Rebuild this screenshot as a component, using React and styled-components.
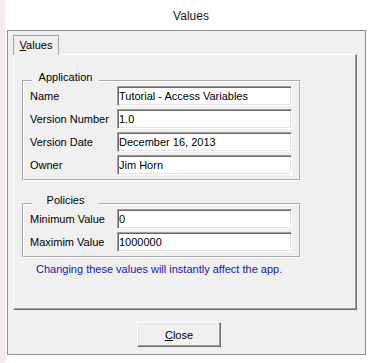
import React from 'react';
import styled, { createGlobalStyle } from 'styled-components';

const Global = createGlobalStyle`
  html, body { margin: 0; padding: 0; background: #ffffff; }
  body { font-family: "Liberation Sans", Arial, sans-serif; font-size: 11px; color: #000; }
  * { box-sizing: border-box; }
`;

const Window = styled.div`
  width: 370px;
  height: 363px;
  display: flex;
  flex-direction: column;
  background: linear-gradient(to right, #f9e9ea 0, #f9e9ea 5px, #ffffff 6px);
`;

const TitleBar = styled.div`
  height: 30px;
  display: flex;
  align-items: center;
  justify-content: center;
  padding: 2px 0 0 12px;
  font-size: 12px;
  color: #1a1a1a;
`;

const Body = styled.div`
  padding: 0 4px 0 7px;
`;

const Dialog = styled.div`
  width: 359px;
  height: 325px;
  border: 1px solid #8f8f8f;
  background: #f0f0f0;
  padding: 4px 8px 0 5px;
  display: flex;
  flex-direction: column;
`;

const TabStrip = styled.div`
  display: flex;
  height: 20px;
  margin-bottom: -1px;
`;

const Tab = styled.div`
  position: relative;
  z-index: 1;
  width: 46px;
  height: 20px;
  border: 1px solid #a5a5a5;
  border-bottom: none;
  background: #f0f0f0;
  display: flex;
  align-items: center;
  justify-content: center;
  padding-bottom: 1px;
`;

const TabPanel = styled.div`
  height: 256px;
  border: 1px solid;
  border-color: #ffffff #696969 #696969 #ffffff;
  box-shadow: inset -1px -1px 0 #a0a0a0;
  padding: 25px 0 0 8px;
  display: flex;
  flex-direction: column;
`;

const Group = styled.div`
  width: 279px;
  border: 2px groove #ffffff;
  padding: 0 7px ${p => p.$bottom}px 6px;
  margin-top: ${p => p.$top}px;
`;

const Caption = styled.div`
  width: 67px;
  height: 13px;
  line-height: 13px;
  margin: -11px 0 0 2px;
  background: #f0f0f0;
  text-align: center;
`;

const Rows = styled.div`
  margin-top: 2px;
  display: flex;
  flex-direction: column;
  gap: 3px;
`;

const Row = styled.div`
  display: flex;
  align-items: center;
  height: 20px;
`;

const Label = styled.div`
  width: 87px;
  flex: none;
`;

const Field = styled.input`
  width: 175px;
  height: 20px;
  margin: 0;
  padding: 0 0 0 1px;
  font: inherit;
  color: #000;
  background: #ffffff;
  border: 1px solid;
  border-color: #a0a0a0 #ffffff #ffffff #a0a0a0;
  box-shadow: inset 1px 1px 0 #696969, inset -1px -1px 0 #e3e3e3;
  outline: none;
`;

const Note = styled.div`
  margin: 5px 0 0 14px;
  line-height: 13px;
  color: #1616b0;
`;

const Footer = styled.div`
  display: flex;
  padding: 12px 0 0 124px;
`;

const Button = styled.button`
  width: 84px;
  height: 25px;
  margin: 0;
  padding: 0;
  font: inherit;
  color: #000;
  background: #f0f0f0;
  border: 1px solid;
  border-color: #ffffff #696969 #696969 #ffffff;
  box-shadow: inset -1px -1px 0 #a0a0a0, inset 1px 1px 0 #e3e3e3;
`;

const appFields = [
  ['Name', 'Tutorial - Access Variables'],
  ['Version Number', '1.0'],
  ['Version Date', 'December 16, 2013'],
  ['Owner', 'Jim Horn'],
];

const policyFields = [
  ['Minimum Value', '0'],
  ['Maximim Value', '1000000'],
];

function FieldRows({ items }) {
  return (
    <Rows>
      {items.map(([label, value]) => (
        <Row key={label}>
          <Label>{label}</Label>
          <Field readOnly value={value} />
        </Row>
      ))}
    </Rows>
  );
}

export default function App() {
  return (
    <Window>
      <Global />
      <TitleBar>Values</TitleBar>
      <Body>
        <Dialog>
          <TabStrip>
            <Tab><span><u>V</u>alues</span></Tab>
          </TabStrip>
          <TabPanel>
            <Group $top={0} $bottom={4}>
              <Caption>Application</Caption>
              <FieldRows items={appFields} />
            </Group>
            <Group $top={22} $bottom={4}>
              <Caption>Policies</Caption>
              <FieldRows items={policyFields} />
            </Group>
            <Note>Changing these values will instantly affect the app.</Note>
          </TabPanel>
          <Footer>
            <Button><u>C</u>lose</Button>
          </Footer>
        </Dialog>
      </Body>
    </Window>
  );
}
